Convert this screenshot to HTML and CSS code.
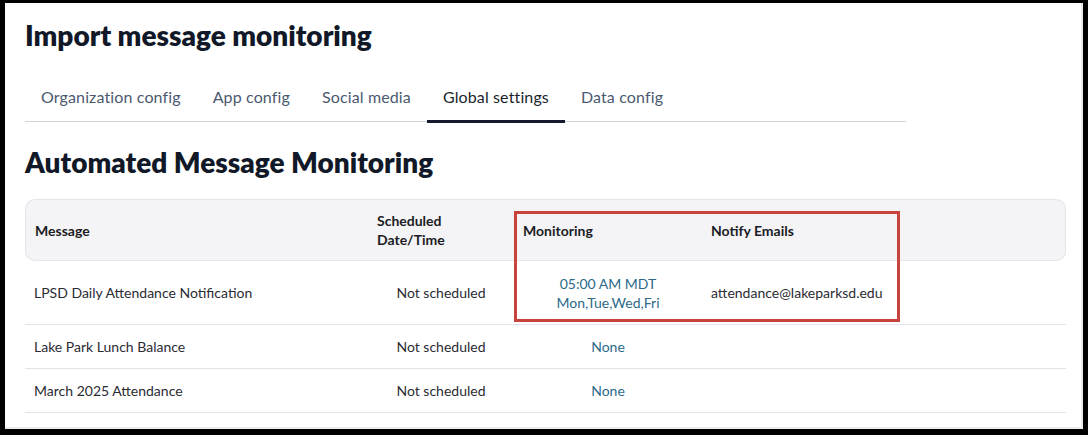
FILE: index.html
```html
<!DOCTYPE html>
<html lang="en">
<head>
    <meta charset="UTF-8">
    <meta name="viewport" content="width=device-width, initial-scale=1.0">
    <title>Import message monitoring</title>
    <link rel="stylesheet" href="styles.css">
</head>
<body>
    <div class="page">
        <h1 class="page-title">Import message monitoring</h1>
        <nav class="tabs">
            <a class="tab">Organization config</a>
            <a class="tab">App config</a>
            <a class="tab">Social media</a>
            <a class="tab active">Global settings</a>
            <a class="tab">Data config</a>
        </nav>

        <h2 class="section-title">Automated Message Monitoring</h2>

        <div class="table-wrap">
            <table class="monitor-table">
                <thead>
                    <tr>
                        <th class="col-message">Message</th>
                        <th class="col-schedule">Scheduled<br>Date/Time</th>
                        <th class="col-monitor">Monitoring</th>
                        <th class="col-emails">Notify Emails</th>
                    </tr>
                </thead>
                <tbody>
                    <tr class="tall">
                        <td>LPSD Daily Attendance Notification</td>
                        <td class="center">Not scheduled</td>
                        <td class="center link">05:00 AM MDT<br>Mon,Tue,Wed,Fri</td>
                        <td>attendance@lakeparksd.edu</td>
                    </tr>
                    <tr>
                        <td>Lake Park Lunch Balance</td>
                        <td class="center">Not scheduled</td>
                        <td class="center link">None</td>
                        <td></td>
                    </tr>
                    <tr>
                        <td>March 2025 Attendance</td>
                        <td class="center">Not scheduled</td>
                        <td class="center link">None</td>
                        <td></td>
                    </tr>
                </tbody>
            </table>
            <!-- annotation box over monitoring + emails -->
            <div class="highlight"></div>
        </div>
    </div>
</body>
</html>
```

FILE: styles.css
```css
*{
    box-sizing: border-box;
    margin: 0px;
    padding: 0px;
}
html, body{
    height: 100%;
}
body{
    background: #000;
    padding: 3px 5px 6px 5px;
    font-family: "Lato", "Noto Sans", sans-serif;
    color: #2b2b33;
}
.page{
    height: 100%;
    background: #fff;
    padding: 15px 15px 0 20px;
    border-right: 2px solid #ececee;
    border-bottom: 2px solid #ececee;
}
.page-title{
    font-size: 28px;
    font-weight: 800;
    color: #111827;
    line-height: 34px;
}
.tabs{
    display: flex;
    width: 881px;
    margin-top: 35px;
    border-bottom: 1px solid #d4d4d8;
}
.tab{
    font-size: 16px;
    letter-spacing: 0.13px;
    line-height: 20px;
    padding: 0 16px 13px 16px;
    color: #4b5a70;
    border-bottom: 3px solid transparent;
    margin-bottom: -2px;
}
.tab.active{
    color: #1a1f2c;
    border-bottom-color: #141a2b;
}
.section-title{
    font-size: 28px;
    font-weight: 800;
    color: #111827;
    line-height: 34px;
    margin-top: 23px;
}
.table-wrap{
    position: relative;
    margin-top: 20px;
}
.monitor-table{
    width: 100%;
    border-collapse: separate;
    border-spacing: 0;
    font-size: 14px;
}
.monitor-table th{
    text-align: left;
    font-weight: 700;
    color: #1c1c24;
    background: #f4f4f6;
    height: 62px;
    padding: 0 9px;
    line-height: 19px;
    border-top: 1px solid #e4e4ea;
    border-bottom: 1px solid #e4e4ea;
}
.monitor-table th:first-child{
    border-left: 1px solid #e4e4ea;
    border-radius: 10px 0 0 10px;
}
.monitor-table th:last-child{
    border-right: 1px solid #e4e4ea;
    border-radius: 0 10px 10px 0;
}
.col-message{ width: 343px; }
.col-schedule{ width: 146px; }
.col-monitor{ width: 188px; }
.monitor-table td{
    height: 44px;
    padding: 0 9px;
    color: #2b2b33;
    line-height: 19px;
    border-bottom: 1px solid #e2e2ea;
}
.monitor-table tr.tall td{
    height: 64px;
}
.monitor-table td.center{
    text-align: center;
}
.monitor-table td.link{
    color: #2d6a89;
}
.highlight{
    position: absolute;
    left: 489px;
    top: 12px;
    width: 386px;
    height: 111px;
    border: 3px solid #c8433b;
}
```
